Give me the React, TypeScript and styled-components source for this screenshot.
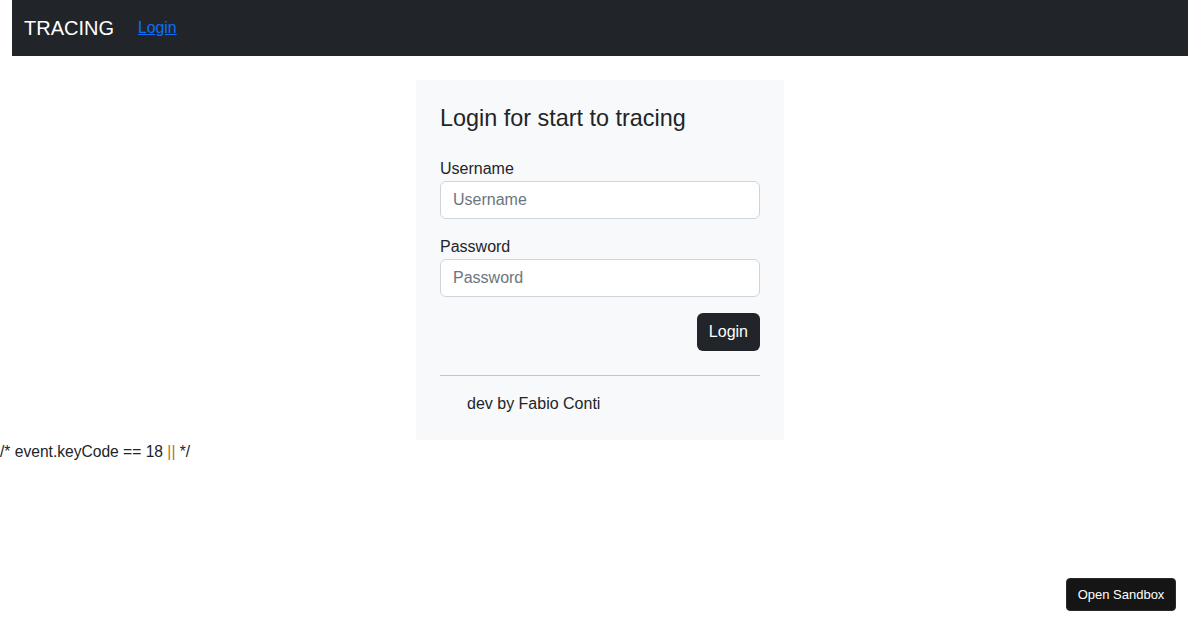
import React, { FC } from 'react';
import styled, { createGlobalStyle } from 'styled-components';

const GlobalStyle = createGlobalStyle`
  * {
    box-sizing: border-box;
  }
  body {
    margin: 0;
    font-family: 'Liberation Sans', Arial, sans-serif;
    font-size: 16px;
    line-height: 1.5;
    color: #212529;
    background: #fff;
  }
`;

const StyledShell = styled.div`
  padding: 0 12px;
`;

const StyledNavbar = styled.nav`
  display: flex;
  align-items: center;
  height: 56px;
  padding: 8px 12px;
  background: #212529;
`;

const StyledBrand = styled.span`
  font-size: 20px;
  line-height: 30px;
  padding: 5px 0;
  margin-right: 16px;
  color: #fff;
`;

const StyledNavLink = styled.a`
  padding: 8px;
  color: #0d6efd;
  text-decoration: underline;
  font-size: 15.8px;
  cursor: pointer;
`;

const StyledCard = styled.div`
  width: 368px;
  margin: 24px auto 0;
  padding: 24px;
  background: #f8f9fa;
`;

const StyledTitle = styled.h4`
  margin: 0 0 24px;
  font-size: 23.4px;
  font-weight: 400;
  line-height: 29px;
`;

const StyledField = styled.div`
  margin-bottom: 16px;
`;

const StyledLabel = styled.label`
  display: block;
  line-height: 24px;
`;

const StyledInput = styled.input`
  display: block;
  width: 100%;
  height: 38px;
  padding: 6px 12px;
  font-family: inherit;
  font-size: 16px;
  color: #212529;
  background: #fff;
  border: 1px solid #ced4da;
  border-radius: 6px;
  &::placeholder {
    color: #6c757d;
  }
`;

const StyledActions = styled.div`
  display: flex;
  justify-content: flex-end;
`;

const StyledDarkButton = styled.button`
  height: 38px;
  padding: 6px 12px;
  font-family: inherit;
  font-size: 16px;
  color: #fff;
  background: #212529;
  border: none;
  border-radius: 6px;
`;

const StyledRule = styled.hr`
  margin: 24px 0 16px;
  border: 0;
  border-top: 1px solid #c4c6c8;
`;

const StyledCredit = styled.p`
  margin: 0;
  padding-left: 27px;
  line-height: 24px;
`;

const StyledComment = styled.p`
  margin: 0;
  font-size: 15.6px;
  line-height: 24px;
`;

const StyledOperator = styled.span`
  color: #b8732a;
`;

const StyledSandboxButton = styled.button`
  position: fixed;
  right: 24px;
  bottom: 19px;
  width: 110px;
  height: 33px;
  font-family: inherit;
  font-size: 13px;
  color: #fff;
  background: #151515;
  border: 1px solid #2a2a2a;
  border-radius: 4px;
`;

const App: FC = () => {
  return (
    <>
      <GlobalStyle />
      <StyledShell>
        <StyledNavbar>
          <StyledBrand>TRACING</StyledBrand>
          <StyledNavLink>Login</StyledNavLink>
        </StyledNavbar>
      </StyledShell>
      <StyledCard>
        <StyledTitle>Login for start to tracing</StyledTitle>
        <StyledField>
          <StyledLabel>Username</StyledLabel>
          <StyledInput type='text' placeholder='Username' />
        </StyledField>
        <StyledField>
          <StyledLabel>Password</StyledLabel>
          <StyledInput type='password' placeholder='Password' />
        </StyledField>
        <StyledActions>
          <StyledDarkButton>Login</StyledDarkButton>
        </StyledActions>
        <StyledRule />
        <StyledCredit>dev by Fabio Conti</StyledCredit>
      </StyledCard>
      <StyledComment>
        /* event.keyCode == 18 <StyledOperator>||</StyledOperator> */
      </StyledComment>
      <StyledSandboxButton>Open Sandbox</StyledSandboxButton>
    </>
  );
};

export default App;
